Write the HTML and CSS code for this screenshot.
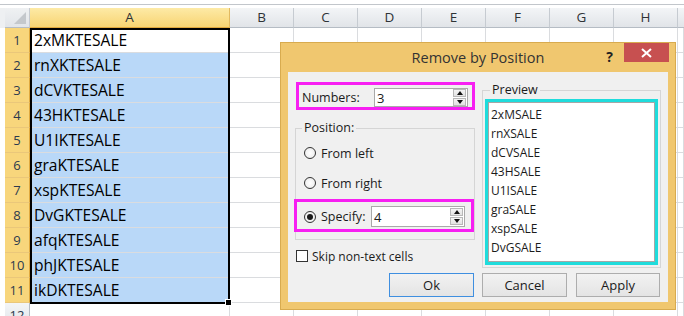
FILE: index.html
```html
<!DOCTYPE html>
<html>
<head>
<meta charset="utf-8">
<link rel="stylesheet" href="styles.css">
</head>
<body>
<div class="formula"></div>
<div class="sheet">
  <div class="pad hp"></div><div class="corner"><span class="tri"></span></div>
  <div class="ch sel">A</div><div class="ch">B</div><div class="ch">C</div><div class="ch">D</div><div class="ch">E</div><div class="ch">F</div><div class="ch">G</div><div class="ch">H</div><div class="ch rest"></div>

  <div class="pad"></div><div class="rh">1</div><div class="c a">2xMKTESALE</div><div class="c"></div><div class="c"></div><div class="c"></div><div class="c"></div><div class="c"></div><div class="c"></div><div class="c"></div><div class="c"></div>
  <div class="pad"></div><div class="rh">2</div><div class="c a sel">rnXKTESALE</div><div class="c"></div><div class="c"></div><div class="c"></div><div class="c"></div><div class="c"></div><div class="c"></div><div class="c"></div><div class="c"></div>
  <div class="pad"></div><div class="rh">3</div><div class="c a sel">dCVKTESALE</div><div class="c"></div><div class="c"></div><div class="c"></div><div class="c"></div><div class="c"></div><div class="c"></div><div class="c"></div><div class="c"></div>
  <div class="pad"></div><div class="rh">4</div><div class="c a sel">43HKTESALE</div><div class="c"></div><div class="c"></div><div class="c"></div><div class="c"></div><div class="c"></div><div class="c"></div><div class="c"></div><div class="c"></div>
  <div class="pad"></div><div class="rh">5</div><div class="c a sel">U1IKTESALE</div><div class="c"></div><div class="c"></div><div class="c"></div><div class="c"></div><div class="c"></div><div class="c"></div><div class="c"></div><div class="c"></div>
  <div class="pad"></div><div class="rh">6</div><div class="c a sel">graKTESALE</div><div class="c"></div><div class="c"></div><div class="c"></div><div class="c"></div><div class="c"></div><div class="c"></div><div class="c"></div><div class="c"></div>
  <div class="pad"></div><div class="rh">7</div><div class="c a sel">xspKTESALE</div><div class="c"></div><div class="c"></div><div class="c"></div><div class="c"></div><div class="c"></div><div class="c"></div><div class="c"></div><div class="c"></div>
  <div class="pad"></div><div class="rh">8</div><div class="c a sel">DvGKTESALE</div><div class="c"></div><div class="c"></div><div class="c"></div><div class="c"></div><div class="c"></div><div class="c"></div><div class="c"></div><div class="c"></div>
  <div class="pad"></div><div class="rh">9</div><div class="c a sel">afqKTESALE</div><div class="c"></div><div class="c"></div><div class="c"></div><div class="c"></div><div class="c"></div><div class="c"></div><div class="c"></div><div class="c"></div>
  <div class="pad"></div><div class="rh">10</div><div class="c a sel">phJKTESALE</div><div class="c"></div><div class="c"></div><div class="c"></div><div class="c"></div><div class="c"></div><div class="c"></div><div class="c"></div><div class="c"></div>
  <div class="pad"></div><div class="rh">11</div><div class="c a sel">ikDKTESALE</div><div class="c"></div><div class="c"></div><div class="c"></div><div class="c"></div><div class="c"></div><div class="c"></div><div class="c"></div><div class="c"></div>
  <div class="pad"></div><div class="rh off">12</div><div class="c a"></div><div class="c"></div><div class="c"></div><div class="c"></div><div class="c"></div><div class="c"></div><div class="c"></div><div class="c"></div><div class="c"></div>

  <div class="selbox"><span class="handle"></span></div>
</div>

<div class="dialog">
  <div class="titlebar">
    <span class="title">Remove by Position</span>
    <span class="help">?</span>
    <span class="close"><svg width="11" height="10" viewBox="0 0 11 10"><path d="M1 1 L10 9 M10 1 L1 9" stroke="#fff" stroke-width="2" fill="none"/></svg></span>
  </div>
  <div class="client">
    <div class="leftcol">
      <div class="numbers hl">
        <span class="lbl">Numbers:</span>
        <div class="spinbox"><span class="val">3</span><span class="spin"><span class="sb up"></span><span class="sb down"></span></span></div>
      </div>
      <fieldset class="group pos">
        <legend>Position:</legend>
        <div class="opt"><span class="radio"></span><span>From left</span></div>
        <div class="opt"><span class="radio"></span><span>From right</span></div>
        <div class="specify hl">
          <span class="radio on"></span><span class="lbl">Specify:</span>
          <div class="spinbox"><span class="val">4</span><span class="spin"><span class="sb up"></span><span class="sb down"></span></span></div>
        </div>
      </fieldset>
      <div class="skip"><span class="check"></span><span>Skip non-text cells</span></div>
    </div>
    <fieldset class="group preview">
      <legend>Preview</legend>
      <div class="cyan">
        <div class="list">
          <div>2xMSALE</div>
          <div>rnXSALE</div>
          <div>dCVSALE</div>
          <div>43HSALE</div>
          <div>U1ISALE</div>
          <div>graSALE</div>
          <div>xspSALE</div>
          <div>DvGSALE</div>
        </div>
      </div>
    </fieldset>
    <div class="btn ok">Ok</div>
    <div class="btnrow"><div class="btn">Cancel</div><div class="btn apply">Apply</div></div>
  </div>
</div>
</body>
</html>
```

FILE: styles.css
```css
html, body { margin: 0; padding: 0; }
body {
  width: 684px; height: 316px; overflow: hidden; position: relative;
  background: #fff;
  font-family: "Open Sans", "Noto Sans", sans-serif;
}
.formula {
  height: 4px;
  border-bottom: 1px solid #c2c6cb;
  margin-bottom: 3px;
}
.sheet {
  position: relative;
  display: grid;
  grid-template-columns: 5px 25px 200px repeat(7, 64px) 1fr;
  grid-template-rows: 20px repeat(12, 25px);
}
.pad { background: #fff; }
.pad.hp { background: #eef0f2; }
.corner {
  background: linear-gradient(#eff1f3, #e2e5e9);
  border-right: 1px solid #c6cbd1;
  border-bottom: 1px solid #b5bcc4;
  box-sizing: border-box;
  position: relative;
}
.tri {
  position: absolute; right: 3px; bottom: 3px;
  width: 0; height: 0;
  border-left: 12px solid transparent;
  border-bottom: 12px solid #c4c8cc;
}
.ch {
  background: linear-gradient(#f3f5f7, #e1e4e8);
  border-right: 1px solid #c6cbd1;
  border-bottom: 1px solid #b5bcc4;
  box-sizing: border-box;
  text-align: center;
  font-size: 13.5px; line-height: 19px; color: #2f3337;
}
.ch.sel {
  background: linear-gradient(#fdeaa6, #f8d473);
  border-bottom-color: #e2a93d;
  border-right-color: #e2b960;
}
.ch.rest { border-right: none; }
.rh {
  background: #f8d67c;
  border-right: 1px solid #e0a93e;
  border-bottom: 1px solid #eac77a;
  box-sizing: border-box;
  text-align: center;
  font-size: 13px; line-height: 25px; color: #2c3a4e;
}
.rh.off {
  background: linear-gradient(#f3f5f7, #e1e4e8);
  border-right: 1px solid #b5bcc4;
  border-bottom-color: #c6cbd1;
}
.c {
  border-right: 1px solid #dadcdf;
  border-bottom: 1px solid #dadcdf;
  box-sizing: border-box;
}
.a {
  padding-left: 4px;
  font-size: 15.6px; line-height: 24px; color: #000;
  white-space: nowrap;
}
.a.sel { background: #b9d8f8; }
.selbox {
  position: absolute; left: 30px; top: 20px;
  width: 200px; height: 276px; box-sizing: border-box;
  border: 2px solid #000;
}
.handle {
  position: absolute; right: -4px; bottom: -4px;
  width: 5px; height: 5px; background: #000; border: 1px solid #fff;
}

.dialog {
  position: absolute; left: 280px; top: 42px;
  width: 396px; height: 268px;
  box-sizing: border-box;
  background: #f0c76f;
  border: 1px solid #d8ab4f;
  display: flex; flex-direction: column;
  font-size: 12px; color: #1b1b1b;
}
.titlebar {
  height: 29px; flex: none;
  position: relative;
  display: flex; align-items: center; justify-content: center;
}
.title { font-size: 14.5px; color: #333; }
.help {
  position: absolute; right: 62px; top: 4px;
  font-weight: bold; font-size: 14px; color: #222;
}
.close {
  position: absolute; right: 6px; top: 0;
  width: 45px; height: 19px; background: #c75050;
  display: flex; align-items: center; justify-content: center;
}
.client {
  flex: 1;
  margin: 0 7px 7px;
  background: #f0f0f0;
  display: grid;
  grid-template-columns: 181px 179px;
  grid-template-rows: 1fr 24px;
  column-gap: 7px;
  padding: 0 0 5px 6px;
}
.leftcol { display: flex; flex-direction: column; }
.hl { border: 3px solid #f71ff2; box-sizing: border-box; }
.numbers {
  margin: 10px 0 0 2px;
  width: 179px; height: 28px;
  display: flex; align-items: center; justify-content: space-between;
  padding: 3px 4px 0 3px;
}
.numbers .lbl { font-size: 12.5px; }
.spinbox {
  width: 94px; height: 19px; box-sizing: border-box;
  background: #fff;
  border: 1px solid #a9a9a9;
  display: flex; align-items: center; justify-content: space-between;
  font-size: 13px;
}
.val { padding-left: 2px; }
.spin { display: flex; flex-direction: column; height: 17px; margin-right: 1px; }
.sb {
  width: 13px; height: 8px;
  border: 1px solid #b8b8b8; box-sizing: border-box;
  background: linear-gradient(#f4f4f4, #e2e2e2);
  position: relative;
}
.sb.down { margin-top: 1px; }
.sb::after {
  content: ""; position: absolute; left: 3px; top: 1px;
  width: 0; height: 0;
  border-left: 3px solid transparent; border-right: 3px solid transparent;
}
.sb.up::after { border-bottom: 4px solid #111; }
.sb.down::after { border-top: 4px solid #111; top: 1px; }

.group {
  margin: 0; padding: 0 0 0 6px;
  border: 1px solid #d5d5d5;
  min-width: 0;
}
.group legend {
  padding: 0 2px;
  font-size: 12.5px; line-height: 16px;
}
.pos {
  margin: 10px 0 0 1px;
  width: 180px; box-sizing: border-box;
  padding-bottom: 7px;
}
.opt {
  height: 30px; margin-left: 2px;
  display: flex; align-items: center; gap: 5px;
  font-size: 12.5px;
}
.opt:first-of-type { margin-top: 2px; }
.radio {
  width: 12px; height: 12px; box-sizing: border-box;
  border-radius: 50%;
  border: 1px solid #333;
  background: radial-gradient(#fff, #e8e8e8);
  position: relative; flex: none;
}
.radio.on::after {
  content: ""; position: absolute; left: 2px; top: 2px;
  width: 6px; height: 6px; border-radius: 50%; background: #1a1a1a;
}
.specify {
  margin: 1px 0 0 -8px;
  width: 180px; height: 33px;
  display: flex; align-items: center;
  padding: 2px 6px 0 7px;
  font-size: 12.5px;
}
.specify .lbl { margin-left: 5px; }
.specify .spinbox { margin-left: auto; height: 21px; }
.skip {
  margin: 8px 0 0 2px;
  display: flex; align-items: center; gap: 4px; height: 16px;
}
.check {
  width: 12px; height: 12px; box-sizing: border-box;
  border: 1px solid #333; background: #fff;
}
.preview {
  margin: 10px 0 0 0;
  padding: 1px 2px 2px 2px;
  align-self: start;
}
.preview legend { margin-left: 5px; }
.cyan { border: 3px solid #1fdcdc; }
.list {
  height: 160px; box-sizing: border-box;
  background: #fff;
  border: 1px solid #a6a6a6;
  padding: 2px 0 0 2px;
  font-size: 12px; line-height: 19px;
}
.btn {
  height: 24px; box-sizing: border-box;
  border: 1px solid #adadad;
  background: linear-gradient(#f2f2f2, #e4e4e4);
  display: flex; align-items: center; justify-content: center;
  font-size: 13px;
}
.ok {
  grid-column: 1; grid-row: 2;
  width: 85px; justify-self: end; margin-right: 1px;
  border-color: #3f8fe0;
}
.btnrow { grid-column: 2; grid-row: 2; display: flex; gap: 9px; }
.btnrow .btn { width: 85px; }
.btnrow .apply { width: 84px; }
```
